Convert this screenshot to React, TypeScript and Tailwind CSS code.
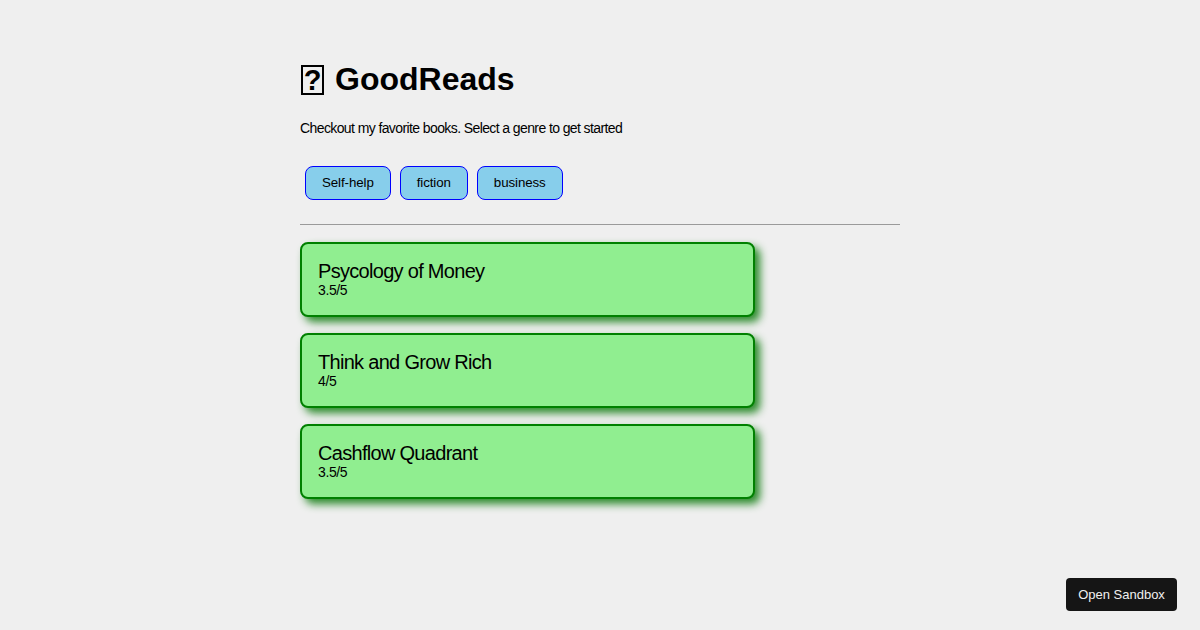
import React from "react";

type Book = { name: string; rating: string };

const books: Book[] = [
  { name: "Psycology of Money", rating: "3.5/5" },
  { name: "Think and Grow Rich", rating: "4/5" },
  { name: "Cashflow Quadrant", rating: "3.5/5" },
];

const genres = ["Self-help", "fiction", "business"];

export default function App() {
  return (
    <div
      className="min-h-[630px] w-full bg-[#efefef] text-black"
      style={{ fontFamily: '"Liberation Sans", Arial, sans-serif' }}
    >
      <div className="mx-auto w-[600px] pt-[61px]">
        <h1 className="flex items-center text-[32px] font-bold leading-[37px]">
          <span className="ml-[1px] mr-[11px] flex h-[30px] w-[23px] items-center justify-center border-2 border-black pt-[1px] text-[29px] font-bold leading-none">
            ?
          </span>
          GoodReads
        </h1>
        <p className="mt-[22px] text-[14px] leading-[16px] tracking-[-0.6px]">
          Checkout my favorite books. Select a genre to get started
        </p>
        <div className="mt-[30px] flex gap-[9px] pl-[5px]">
          {genres.map((g) => (
            <button
              key={g}
              className="h-[34px] rounded-[8px] border border-[#0000ff] bg-[#87ceeb] px-[16px] pb-[2px] text-[13.33px] leading-[15px] tracking-[-0.1px]"
            >
              {g}
            </button>
          ))}
        </div>
        <hr className="mt-[24px] border-0 border-t border-[#9a9a9a]" />
        <ul className="mt-[17px] flex flex-col gap-[16px]">
          {books.map((b) => (
            <li
              key={b.name}
              className="w-[455px] rounded-[8px] border-2 border-[#008000] bg-[#90ee90] px-[16px] pt-[16px] pb-[17px] shadow-[5px_5px_8px_#2a8a2a]"
            >
              <div className="text-[20px] leading-[22px] tracking-[-0.7px]">{b.name}</div>
              <div className="text-[14px] leading-[16px] tracking-[-0.4px]">{b.rating}</div>
            </li>
          ))}
        </ul>
      </div>
      <button className="fixed bottom-[19px] right-[23px] h-[33px] w-[111px] rounded-[4px] bg-[#151515] text-[13px] text-[#f0f0f0]">
        Open Sandbox
      </button>
    </div>
  );
}
